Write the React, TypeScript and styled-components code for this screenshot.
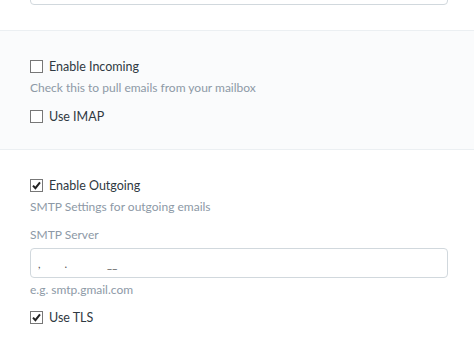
import React from "react";
import styled, { createGlobalStyle } from "styled-components";

const Global = createGlobalStyle`
  html, body { margin: 0; padding: 0; background: #fff; }
  body { font-family: Lato, "Noto Sans", sans-serif; color: #36414c; overflow: hidden; }
  * { box-sizing: border-box; }
`;

const Page = styled.div`
  width: 474px;
  height: 361px;
  overflow: hidden;
  display: flex;
  flex-direction: column;
`;

const TopSection = styled.div`
  padding: 0 26px 25px 30px;
`;

const Band = styled.section<{ $shaded?: boolean }>`
  display: flex;
  flex-direction: column;
  padding: ${(p) => (p.$shaded ? "29px 26px 26px 30px" : "29px 26px 0 30px")};
  background: ${(p) => (p.$shaded ? "#fafbfc" : "#fff")};
  border-top: ${(p) => (p.$shaded ? "1px solid #ebeff2" : "none")};
  border-bottom: ${(p) => (p.$shaded ? "1px solid #ebeff2" : "none")};
`;

const Input = styled.div<{ $clip?: boolean }>`
  height: 30px;
  border: 1px solid #d1d8dd;
  border-radius: 4px;
  background: #fff;
  margin-top: ${(p) => (p.$clip ? "-25px" : "4px")};
  display: flex;
  align-items: center;
  padding: 0 7px;
  font-size: 13px;
  color: #6c7680;
`;

const CheckRow = styled.label<{ $gap?: number }>`
  display: flex;
  align-items: center;
  height: 13px;
  margin-top: ${(p) => p.$gap ?? 0}px;
  font-size: 12.5px;
  color: #2f3942;
`;

const Box = styled.span`
  width: 13px;
  height: 13px;
  border: 1px solid #777;
  background: #fff;
  display: flex;
  align-items: center;
  justify-content: center;
  margin-right: 6px;
  flex: none;
`;

const Help = styled.div<{ $gap?: number }>`
  font-size: 12px;
  line-height: 18px;
  color: #8d99a6;
  margin-top: ${(p) => p.$gap ?? 0}px;
`;

const Label = styled.div`
  font-size: 12px;
  line-height: 18px;
  color: #8d99a6;
  margin-top: 10px;
`;

const Frag = styled.span<{ $left: number }>`
  margin-left: ${(p) => p.$left}px;
  color: #555;
  font-size: 11px;
`;

const Check = ({ checked }: { checked?: boolean }) => (
  <Box>
    {checked && (
      <svg width="9" height="9" viewBox="0 0 9 9">
        <path d="M1 4.6 L3.4 7.2 L8 1.4" fill="none" stroke="#222" strokeWidth="2" />
      </svg>
    )}
  </Box>
);

export default function App() {
  return (
    <Page>
      <Global />
      <TopSection>
        <Input $clip />
      </TopSection>
      <Band $shaded>
        <CheckRow>
          <Check />
          Enable Incoming
        </CheckRow>
        <Help $gap={6}>Check this to pull emails from your mailbox</Help>
        <CheckRow $gap={13}>
          <Check />
          Use IMAP
        </CheckRow>
      </Band>
      <Band>
        <CheckRow>
          <Check checked />
          Enable Outgoing
        </CheckRow>
        <Help $gap={6}>SMTP Settings for outgoing emails</Help>
        <Label>SMTP Server</Label>
        <Input>
          <Frag $left={0}>,</Frag>
          <Frag $left={24}>.</Frag>
          <Frag $left={40}>__</Frag>
        </Input>
        <Help $gap={3}>e.g. smtp.gmail.com</Help>
        <CheckRow $gap={12}>
          <Check checked />
          Use TLS
        </CheckRow>
      </Band>
    </Page>
  );
}
